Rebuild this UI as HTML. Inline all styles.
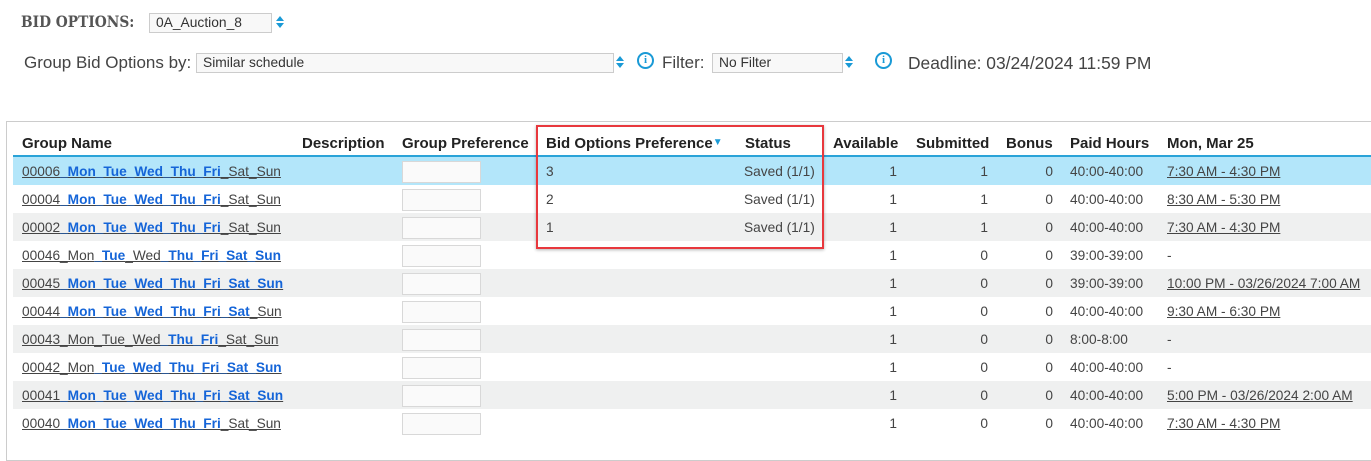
<!DOCTYPE html>
<html><head><meta charset="utf-8"><style>
*{margin:0;padding:0;box-sizing:border-box}
body{width:1371px;height:454px;background:#fff;font-family:"Liberation Sans",Arial,sans-serif;color:#444;position:relative;overflow:hidden}
.a{position:absolute;white-space:nowrap}
.sel{position:absolute;border:1px solid #ccc;background:#f8f8f8;font-size:13.8px;padding:1px 6px;height:20px;color:#333}
.arr{position:absolute;width:10px;height:14px}
.info{position:absolute;width:17px;height:17px;border:2px solid #1a9ad6;border-radius:50%;color:#1a9ad6;font-weight:bold;font-size:11px;text-align:center;line-height:13px;font-family:"Liberation Serif",serif}
.hd{position:absolute;top:135px;font-size:15px;font-weight:bold;color:#222;white-space:nowrap}
.row{position:absolute;left:13px;width:1358px;height:28px;font-size:13.7px;color:#444}
.row div{position:absolute;top:7px;white-space:nowrap}
.nm{left:9px;text-decoration:underline;color:#444}
.nm b{color:#1565d8}
.inp{position:absolute;left:389px;top:4px!important;width:79px;height:22px;border:1px solid #d8d8d8;background:#fafafa}
.r{text-align:right}
.lk{text-decoration:underline}
</style></head><body>
<div class="a" style="left:21px;top:12px;font-size:16px;font-weight:bold;font-family:'DejaVu Serif','Liberation Serif',serif;color:#555;transform:scaleX(0.86);transform-origin:left">BID OPTIONS:</div>
<div class="sel" style="left:149px;top:13px;width:123px">0A_Auction_8</div>
<svg class="arr" style="left:275px;top:15px" viewBox="0 0 10 14"><path d="M1 6L5 1 9 6Z M1 8L5 13 9 8Z" fill="#1a9ad6"/></svg>
<div class="a" style="left:24px;top:53px;font-size:17px;color:#444">Group Bid Options by:</div>
<div class="sel" style="left:196px;top:53px;width:418px">Similar schedule</div>
<svg class="arr" style="left:615px;top:55px" viewBox="0 0 10 14"><path d="M1 6L5 1 9 6Z M1 8L5 13 9 8Z" fill="#1a9ad6"/></svg>
<div class="info" style="left:637px;top:52px">i</div>
<div class="a" style="left:662px;top:53px;font-size:17px">Filter:</div>
<div class="sel" style="left:712px;top:53px;width:131px">No Filter</div>
<svg class="arr" style="left:844px;top:55px" viewBox="0 0 10 14"><path d="M1 6L5 1 9 6Z M1 8L5 13 9 8Z" fill="#1a9ad6"/></svg>
<div class="info" style="left:875px;top:52px">i</div>
<div class="a" style="left:908px;top:53px;font-size:17.4px">Deadline: 03/24/2024 11:59 PM</div>

<div style="position:absolute;left:6px;top:121px;width:1370px;height:340px;border:1px solid #ccc"></div>
<div class="hd" style="left:22px">Group Name</div>
<div class="hd" style="left:302px">Description</div>
<div class="hd" style="left:402px">Group Preference</div>
<div class="hd" style="left:546px">Bid Options Preference<span style="color:#1a9ad6;font-size:10px;vertical-align:3px">▼</span></div>
<div class="hd" style="left:745px">Status</div>
<div class="hd" style="left:833px">Available</div>
<div class="hd" style="left:916px">Submitted</div>
<div class="hd" style="left:1006px">Bonus</div>
<div class="hd" style="left:1070px">Paid Hours</div>
<div class="hd" style="left:1167px">Mon, Mar 25</div>
<div style="position:absolute;left:13px;top:155px;width:1358px;height:2px;background:#2aa3d8"></div>

<div class="row" style="top:157px;background:#b3e6fa"><div class="nm">00006<b>_Mon_Tue_Wed_Thu_Fri</b>_Sat_Sun</div><div class="inp"></div><div style="left:533px">3</div><div style="left:731px">Saved (1/1)</div><div class="r" style="left:860px;width:24px">1</div><div class="r" style="left:950px;width:25px">1</div><div class="r" style="left:1015px;width:25px">0</div><div style="left:1057px">40:00-40:00</div><div class="lk" style="left:1154px">7:30 AM - 4:30 PM</div></div>
<div class="row" style="top:185px;background:#fff"><div class="nm">00004<b>_Mon_Tue_Wed_Thu_Fri</b>_Sat_Sun</div><div class="inp"></div><div style="left:533px">2</div><div style="left:731px">Saved (1/1)</div><div class="r" style="left:860px;width:24px">1</div><div class="r" style="left:950px;width:25px">1</div><div class="r" style="left:1015px;width:25px">0</div><div style="left:1057px">40:00-40:00</div><div class="lk" style="left:1154px">8:30 AM - 5:30 PM</div></div>
<div class="row" style="top:213px;background:#eff0f0"><div class="nm">00002<b>_Mon_Tue_Wed_Thu_Fri</b>_Sat_Sun</div><div class="inp"></div><div style="left:533px">1</div><div style="left:731px">Saved (1/1)</div><div class="r" style="left:860px;width:24px">1</div><div class="r" style="left:950px;width:25px">1</div><div class="r" style="left:1015px;width:25px">0</div><div style="left:1057px">40:00-40:00</div><div class="lk" style="left:1154px">7:30 AM - 4:30 PM</div></div>
<div class="row" style="top:241px;background:#fff"><div class="nm">00046_Mon<b>_Tue</b>_Wed<b>_Thu_Fri_Sat_Sun</b></div><div class="inp"></div><div class="r" style="left:860px;width:24px">1</div><div class="r" style="left:950px;width:25px">0</div><div class="r" style="left:1015px;width:25px">0</div><div style="left:1057px">39:00-39:00</div><div style="left:1154px">-</div></div>
<div class="row" style="top:269px;background:#eff0f0"><div class="nm">00045<b>_Mon_Tue_Wed_Thu_Fri_Sat_Sun</b></div><div class="inp"></div><div class="r" style="left:860px;width:24px">1</div><div class="r" style="left:950px;width:25px">0</div><div class="r" style="left:1015px;width:25px">0</div><div style="left:1057px">39:00-39:00</div><div class="lk" style="left:1154px">10:00 PM - 03/26/2024 7:00 AM</div></div>
<div class="row" style="top:297px;background:#fff"><div class="nm">00044<b>_Mon_Tue_Wed_Thu_Fri_Sat</b>_Sun</div><div class="inp"></div><div class="r" style="left:860px;width:24px">1</div><div class="r" style="left:950px;width:25px">0</div><div class="r" style="left:1015px;width:25px">0</div><div style="left:1057px">40:00-40:00</div><div class="lk" style="left:1154px">9:30 AM - 6:30 PM</div></div>
<div class="row" style="top:325px;background:#eff0f0"><div class="nm">00043_Mon_Tue_Wed<b>_Thu_Fri</b>_Sat_Sun</div><div class="inp"></div><div class="r" style="left:860px;width:24px">1</div><div class="r" style="left:950px;width:25px">0</div><div class="r" style="left:1015px;width:25px">0</div><div style="left:1057px">8:00-8:00</div><div style="left:1154px">-</div></div>
<div class="row" style="top:353px;background:#fff"><div class="nm">00042_Mon<b>_Tue_Wed_Thu_Fri_Sat_Sun</b></div><div class="inp"></div><div class="r" style="left:860px;width:24px">1</div><div class="r" style="left:950px;width:25px">0</div><div class="r" style="left:1015px;width:25px">0</div><div style="left:1057px">40:00-40:00</div><div style="left:1154px">-</div></div>
<div class="row" style="top:381px;background:#eff0f0"><div class="nm">00041<b>_Mon_Tue_Wed_Thu_Fri_Sat_Sun</b></div><div class="inp"></div><div class="r" style="left:860px;width:24px">1</div><div class="r" style="left:950px;width:25px">0</div><div class="r" style="left:1015px;width:25px">0</div><div style="left:1057px">40:00-40:00</div><div class="lk" style="left:1154px">5:00 PM - 03/26/2024 2:00 AM</div></div>
<div class="row" style="top:409px;background:#fff"><div class="nm">00040<b>_Mon_Tue_Wed_Thu_Fri</b>_Sat_Sun</div><div class="inp"></div><div class="r" style="left:860px;width:24px">1</div><div class="r" style="left:950px;width:25px">0</div><div class="r" style="left:1015px;width:25px">0</div><div style="left:1057px">40:00-40:00</div><div class="lk" style="left:1154px">7:30 AM - 4:30 PM</div></div>

<div style="position:absolute;left:536px;top:125px;width:288px;height:124px;border:2px solid #e8383d;box-shadow:0 1px 3px rgba(0,0,0,.3)"></div>
</body></html>
